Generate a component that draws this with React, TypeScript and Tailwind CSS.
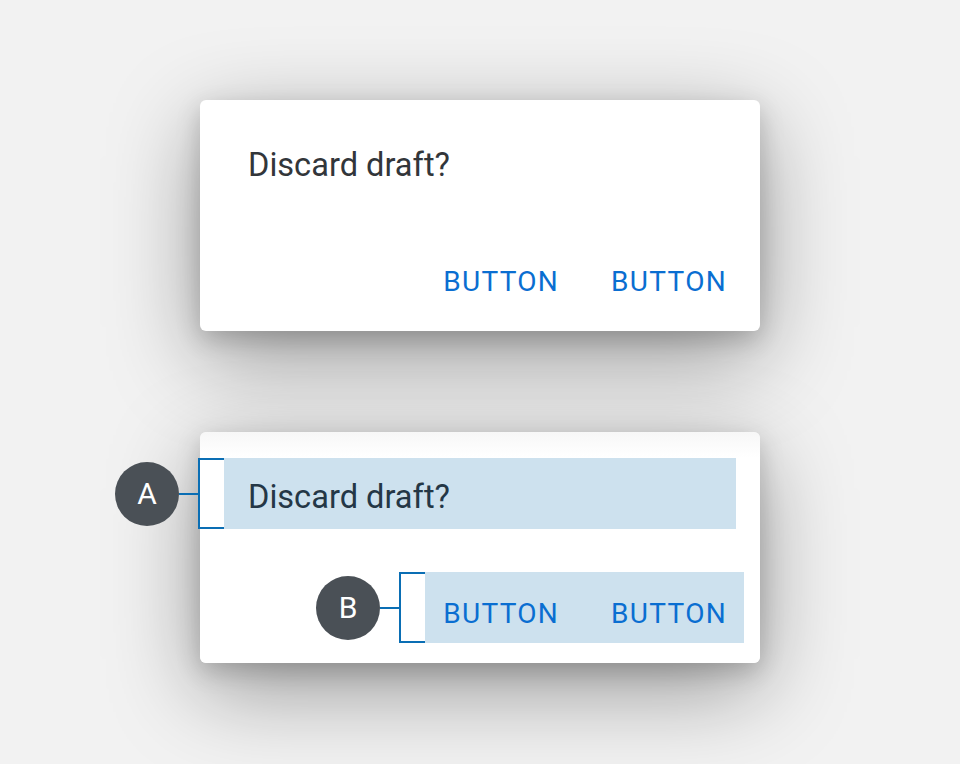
const font = { fontFamily: 'Roboto, "Noto Sans", Arial, sans-serif' };

function Annotation({ label }: { label: string }) {
  return (
    <div className="absolute right-full top-0 h-full flex items-center">
      <div className="w-16 h-16 rounded-full bg-[#4a5056] text-white text-[30px] flex items-center justify-center">
        {label}
      </div>
      <div className="w-[19px] h-[2px] bg-[#0a6eb4]" />
      <div className="w-[26px] h-full border-2 border-r-0 border-[#0a6eb4]" />
    </div>
  );
}

function Dialog({ annotated }: { annotated?: boolean }) {
  const hl = annotated ? "bg-[#cde1ee]" : "";
  return (
    <div
      className={
        "w-[560px] h-[231px] rounded-md flex flex-col shadow-[0_26px_90px_rgba(0,0,0,0.38),0_8px_24px_rgba(0,0,0,0.18)] " +
        (annotated ? "bg-linear-to-b from-[#f7f7f7] to-white to-[11%]" : "bg-white")
      }
    >
      <div className={"relative mt-[26px] mx-6 h-[71px] px-6 pt-2 flex items-center " + hl}>
        {annotated && <Annotation label="A" />}
        <span className={"text-[32.6px] leading-none " + (annotated ? "text-[#243746]" : "text-[#32363a]")}>
          Discard draft?
        </span>
      </div>
      <div className={"relative mt-auto mb-5 mr-4 self-end h-[71px] pl-[18px] pr-[17px] pt-3 flex items-center gap-[52px] " + hl}>
        {annotated && <Annotation label="B" />}
        <span className="text-[28px] leading-none tracking-[1.3px] text-[#0a6ed1]">BUTTON</span>
        <span className="text-[28px] leading-none tracking-[1.3px] text-[#0a6ed1]">BUTTON</span>
      </div>
    </div>
  );
}

export default function App() {
  return (
    <div className="w-[960px] h-[764px] bg-[#f2f2f2] flex flex-col items-center pt-[100px] gap-[101px] overflow-hidden" style={font}>
      <Dialog />
      <Dialog annotated />
    </div>
  );
}
